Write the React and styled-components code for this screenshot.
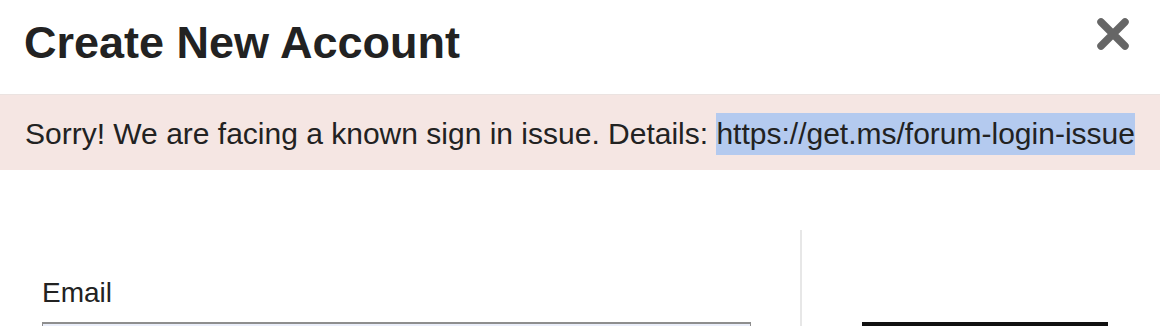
import styled, { createGlobalStyle } from 'styled-components'

const Global = createGlobalStyle`
  html, body {
    margin: 0;
    padding: 0;
    background: #ffffff;
    font-family: "Liberation Sans", Arial, Helvetica, sans-serif;
    color: #222222;
  }
`

const Modal = styled.div`
  width: 1160px;
  height: 326px;
  overflow: hidden;
  background: #ffffff;
`

const Header = styled.div`
  display: flex;
  justify-content: space-between;
  align-items: flex-start;
  height: 94px;
  box-sizing: border-box;
  padding: 18px 30px 0 24px;
`

const Title = styled.h1`
  margin: 2px 0 0;
  font-size: 45px;
  line-height: 45px;
  font-weight: 700;
  color: #222222;
`

const Close = styled.button`
  display: flex;
  padding: 0;
  border: 0;
  background: none;
  cursor: pointer;
`

const Banner = styled.div`
  box-sizing: border-box;
  height: 76px;
  padding: 18px 25px 0;
  background: #f5e6e3;
  border-top: 1px solid #ebe3e1;
  font-size: 30px;
  line-height: 42px;
  color: #222222;
  white-space: nowrap;
`

const Selected = styled.span`
  display: inline-block;
  background: #b4caef;
  line-height: 42px;
`

const Body = styled.div`
  display: flex;
  padding: 60px 0 0 42px;
`

const LeftCol = styled.div`
  width: 709px;
  padding-top: 47px;
`

const Label = styled.label`
  display: block;
  font-size: 28px;
  line-height: 32px;
  margin-bottom: 13px;
  color: #222222;
`

const Input = styled.input`
  display: block;
  box-sizing: border-box;
  width: 709px;
  height: 48px;
  border: 1px solid #8e8e8e;
  border-top-width: 2px;
  background: #eaeefa;
  font-size: 26px;
  font-family: inherit;
  outline: none;
`

const Divider = styled.div`
  width: 2px;
  height: 200px;
  margin-left: 49px;
  background: #e7e7e7;
`

const RightCol = styled.div`
  padding: 92px 0 0 60px;
`

const BlackButton = styled.button`
  display: block;
  width: 246px;
  height: 48px;
  border: 0;
  background: #111111;
`

export default function App() {
  return (
    <Modal>
      <Global />
      <Header>
        <Title>Create New Account</Title>
        <Close aria-label="Close">
          <svg width="34" height="32" viewBox="0 0 34 32">
            <path
              d="M5 4 L29 28 M29 4 L5 28"
              stroke="#666666"
              strokeWidth="7.5"
              strokeLinecap="round"
              fill="none"
            />
          </svg>
        </Close>
      </Header>
      <Banner>
        Sorry! We are facing a known sign in issue. Details:{' '}
        <Selected>https://get.ms/forum-login-issue</Selected>
      </Banner>
      <Body>
        <LeftCol>
          <Label htmlFor="email">Email</Label>
          <Input id="email" type="email" />
        </LeftCol>
        <Divider />
        <RightCol>
          <BlackButton />
        </RightCol>
      </Body>
    </Modal>
  )
}
